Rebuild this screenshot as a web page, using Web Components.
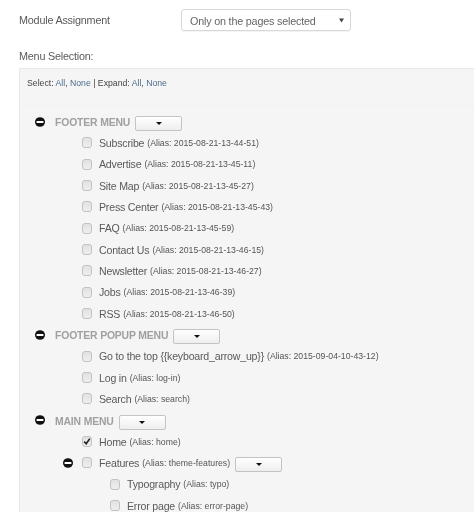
<!DOCTYPE html>
<html lang="en">
<head>
<meta charset="utf-8">
<title>Module Assignment</title>
<style>
html,body{margin:0;padding:0;background:#fff;overflow:hidden;height:513px}
body{font-family:"Liberation Sans",Arial,sans-serif;color:#555}
</style>
</head>
<body>
<module-form>
  <assign-row label="Module Assignment" value="Only on the pages selected"></assign-row>
  <field-title>Menu Selection:</field-title>
  <menu-panel>
    <select-bar></select-bar>
    <tree-row kind="head" toggle label="FOOTER MENU"></tree-row>
    <tree-row indent="47" check label="Subscribe" alias="2015-08-21-13-44-51"></tree-row>
    <tree-row indent="47" check label="Advertise" alias="2015-08-21-13-45-11"></tree-row>
    <tree-row indent="47" check label="Site Map" alias="2015-08-21-13-45-27"></tree-row>
    <tree-row indent="47" check label="Press Center" alias="2015-08-21-13-45-43"></tree-row>
    <tree-row indent="47" check label="FAQ" alias="2015-08-21-13-45-59"></tree-row>
    <tree-row indent="47" check label="Contact Us" alias="2015-08-21-13-46-15"></tree-row>
    <tree-row indent="47" check label="Newsletter" alias="2015-08-21-13-46-27"></tree-row>
    <tree-row indent="47" check label="Jobs" alias="2015-08-21-13-46-39"></tree-row>
    <tree-row indent="47" check label="RSS" alias="2015-08-21-13-46-50"></tree-row>
    <tree-row kind="head" toggle label="FOOTER POPUP MENU"></tree-row>
    <tree-row indent="47" check label="Go to the top {{keyboard_arrow_up}}" alias="2015-09-04-10-43-12"></tree-row>
    <tree-row indent="47" check label="Log in" alias="log-in"></tree-row>
    <tree-row indent="47" check label="Search" alias="search"></tree-row>
    <tree-row kind="head" toggle label="MAIN MENU"></tree-row>
    <tree-row indent="47" check checked label="Home" alias="home"></tree-row>
    <tree-row indent="28" toggle check button label="Features" alias="theme-features"></tree-row>
    <tree-row indent="75" check label="Typography" alias="typo"></tree-row>
    <tree-row indent="75" check label="Error page" alias="error-page"></tree-row>
  </menu-panel>
</module-form>
<script>
function shadow(el, html){ el.attachShadow({mode:'open'}).innerHTML = html; }
function esc(s){ return String(s).replace(/&/g,'&amp;').replace(/</g,'&lt;').replace(/"/g,'&quot;'); }

customElements.define('module-form', class extends HTMLElement{
  constructor(){ super(); shadow(this, `<style>
    :host{display:block;height:512px;padding-left:19px;box-sizing:border-box;filter:blur(.4px);overflow:hidden}
  </style><slot></slot>`); }
});

customElements.define('field-title', class extends HTMLElement{
  constructor(){ super(); shadow(this, `<style>
    :host{display:block;font-size:10.8px;letter-spacing:-.2px;line-height:12px;padding:19px 0 6px;color:#5a5a5a}
  </style><slot></slot>`); }
});

customElements.define('assign-row', class extends HTMLElement{
  constructor(){ super(); shadow(this, `<style>
    :host{display:flex;align-items:center;padding-top:9px;height:22px;font-size:10.8px;letter-spacing:-.2px;color:#5a5a5a}
    .l{width:162px}
    .s{box-sizing:border-box;width:170px;height:22px;border:1px solid #d8d8d8;border-radius:3px;background:#fff;display:flex;align-items:center;justify-content:space-between;padding:1px 6px 0 8px;color:#666;box-shadow:0 1px 1px rgba(0,0,0,.05)}
    svg{display:block}
  </style><span class="l"></span><div class="s"><span class="v"></span>
  <svg width="5" height="5" viewBox="0 0 5 5"><path d="M0 .5H5L2.5 4.5Z" fill="#444"/></svg></div>`); }
  connectedCallback(){
    this.shadowRoot.querySelector('.l').textContent=this.getAttribute('label');
    this.shadowRoot.querySelector('.v').textContent=this.getAttribute('value');
  }
});

customElements.define('menu-panel', class extends HTMLElement{
  constructor(){ super(); shadow(this, `<style>
    :host{display:block;box-sizing:border-box;width:495px;height:444px;background:#f5f5f5;border:1px solid #e8e8e8;border-width:1px 0 0 1px;padding-left:15px;overflow:hidden}
  </style><slot></slot>`); }
});

customElements.define('select-bar', class extends HTMLElement{
  constructor(){ super(); shadow(this, `<style>
    :host{display:block;margin:0 0 5px -8px;height:37px;padding-top:8px;box-sizing:border-box;border-bottom:1px solid #f1f1f1;font-size:8.7px;line-height:12px;color:#444}
    a{color:#4d6d8f;text-decoration:none}
  </style>Select: <a href="#">All</a>, <a href="#">None</a> | Expand: <a href="#">All</a>, <a href="#">None</a>`); }
});

customElements.define('minus-toggle', class extends HTMLElement{
  constructor(){ super(); shadow(this, `<style>
    :host{display:block;width:10px;height:10px;flex:none}
    svg{display:block}
  </style><svg width="10" height="10" viewBox="0 0 10 10"><ellipse cx="5" cy="5" rx="5" ry="4.8" fill="#111"/><rect x="1.6" y="4" width="6.8" height="2" fill="#fff"/></svg>`); }
});

customElements.define('tick-box', class extends HTMLElement{
  constructor(){ super(); shadow(this, `<style>
    :host{display:block;box-sizing:border-box;width:10px;height:11px;flex:none;border:1px solid #c2c2c2;border-radius:3px;background:linear-gradient(#e2e2e2,#eeeeee)}
    svg{display:block}
  </style><svg width="8" height="8" viewBox="0 0 8 8"></svg>`); }
  connectedCallback(){
    if(this.hasAttribute('checked'))
      this.shadowRoot.querySelector('svg').innerHTML='<path d="M1.2 4.6L3.2 6.8L6.8 1.6" fill="none" stroke="#222" stroke-width="1.6"/>';
  }
});

customElements.define('caret-button', class extends HTMLElement{
  constructor(){ super(); shadow(this, `<style>
    :host{display:flex;align-items:center;justify-content:center;box-sizing:border-box;width:47px;height:15px;flex:none;border:1px solid #c4c4c4;border-radius:2px;background:linear-gradient(#fff,#eeeeee)}
    svg{display:block}
  </style><svg width="6" height="3" viewBox="0 0 6 3"><path d="M0 0H6L3 3Z" fill="#111"/></svg>`); }
});

customElements.define('tree-row', class extends HTMLElement{
  constructor(){ super();
    shadow(this, `<style>
    :host{display:flex;align-items:center;height:21.33px;font-size:10.6px;letter-spacing:-.2px;color:#5a5a5a;white-space:nowrap}
    .t{margin-right:9px}
    .head .t{margin-right:10px}
    .c{margin-right:7px}
    .label.h{font-weight:bold;font-size:10.4px;letter-spacing:-.15px;color:#a0a0a0;margin-top:2px}
    .a{font-size:8.7px;letter-spacing:0;margin-left:3px;color:#555}
    caret-button{margin:4px 0 0 5px}
    .wrap{display:flex;align-items:center}
  </style><div class="wrap"></div>`);
  }
  connectedCallback(){
    const g=n=>this.getAttribute(n), h=n=>this.hasAttribute(n), head=g('kind')==='head';
    this.style.paddingLeft=(g('indent')||0)+'px';
    let s='';
    if(h('toggle')) s+='<minus-toggle class="t"></minus-toggle>';
    if(h('check')) s+=`<tick-box class="c"${h('checked')?' checked':''}></tick-box>`;
    s+=`<span class="label${head?' h':''}">${esc(g('label'))}</span>`;
    if(g('alias')) s+=`<span class="a">(Alias: ${esc(g('alias'))})</span>`;
    if(head||h('button')) s+='<caret-button></caret-button>';
    const w=this.shadowRoot.querySelector('.wrap');
    w.className='wrap'+(head?' head':'');
    w.innerHTML=s;
  }
});
</script>
</body>
</html>
